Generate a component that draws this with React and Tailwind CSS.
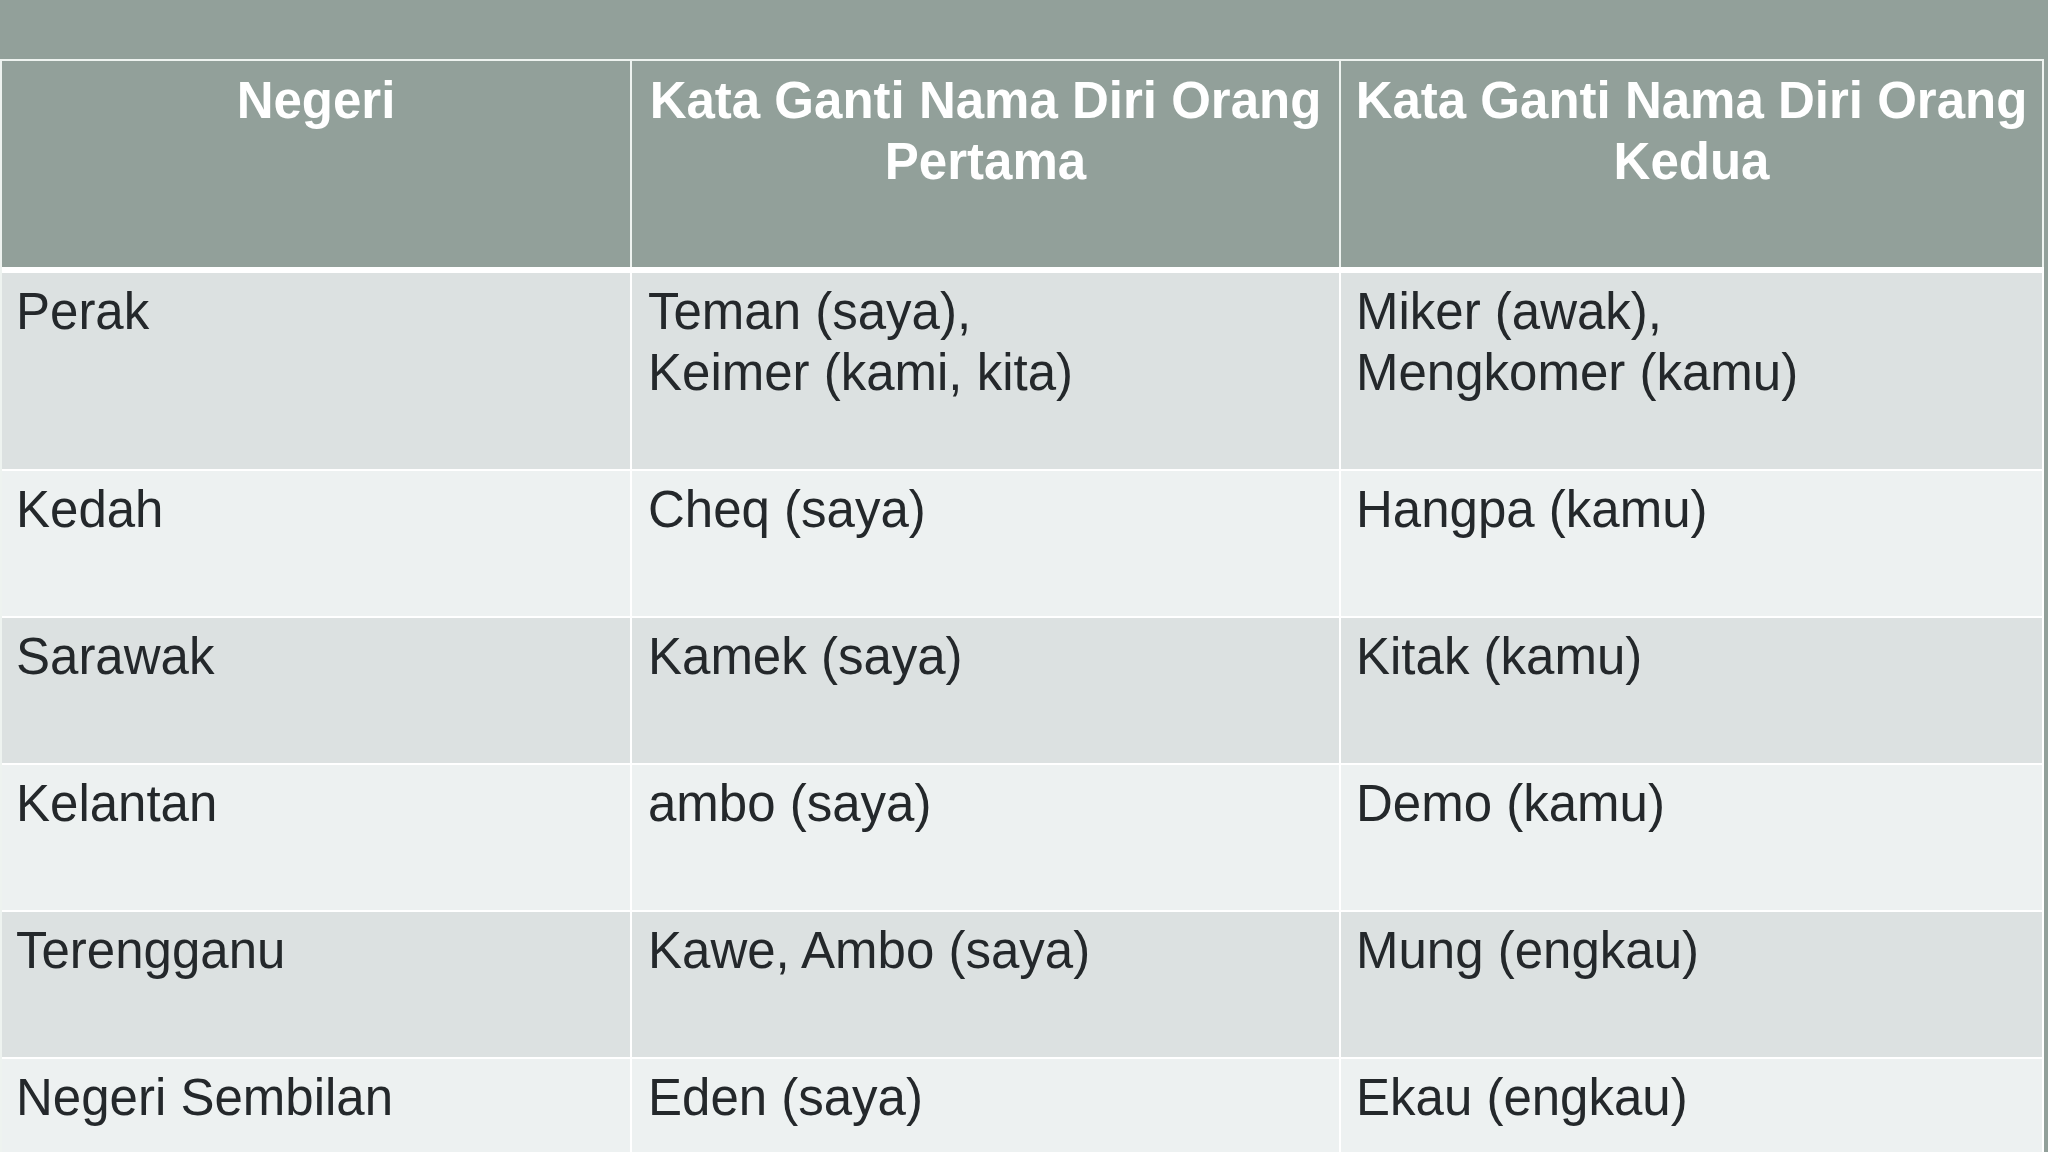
const rows = [
  { negeri: "Perak", first: ["Teman (saya),", "Keimer (kami, kita)"], second: ["Miker (awak),", "Mengkomer (kamu)"], tall: true },
  { negeri: "Kedah", first: ["Cheq (saya)"], second: ["Hangpa (kamu)"] },
  { negeri: "Sarawak", first: ["Kamek (saya)"], second: ["Kitak (kamu)"] },
  { negeri: "Kelantan", first: ["ambo (saya)"], second: ["Demo (kamu)"] },
  { negeri: "Terengganu", first: ["Kawe, Ambo (saya)"], second: ["Mung (engkau)"] },
  { negeri: "Negeri Sembilan", first: ["Eden (saya)"], second: ["Ekau (engkau)"] }
];

const Lines = ({ lines }) => (
  <>
    {lines.map((l, i) => (
      <div key={i} className="whitespace-nowrap">
        {l}
      </div>
    ))}
  </>
);

const App = () => {
  return (
    <div
      className="w-[2048px] h-[1152px] overflow-hidden bg-[#92a09a]"
      style={{ fontFamily: '"Liberation Sans", Arial, sans-serif' }}
    >
      {/* top band */}
      <div className="h-[59px]" />

      <div className="w-[2044px] border-t-2 border-l-2 border-[#eef3f0] bg-white">
        {/* header */}
        <div className="flex h-[206px] bg-[#92a09a] text-white font-bold text-[51px] leading-[61px] text-center">
          <div className="w-[630px] shrink-0 pt-[9px] border-r-2 border-[#eef3f0]">Negeri</div>
          <div className="w-[709px] shrink-0 pt-[9px] border-r-2 border-[#eef3f0]">
            <Lines lines={["Kata Ganti Nama Diri Orang", "Pertama"]} />
          </div>
          <div className="w-[703px] shrink-0 pt-[9px] border-r-2 border-[#eef3f0]">
            <Lines lines={["Kata Ganti Nama Diri Orang", "Kedua"]} />
          </div>
        </div>

        {/* body */}
        <div className="pt-[6px] flex flex-col gap-[2px] text-[#24282b] text-[51px] leading-[61px]">
          {rows.map((r, i) => (
            <div
              key={r.negeri}
              className={`flex ${r.tall ? "h-[196px]" : "h-[145px]"} ${
                i % 2 === 0 ? "bg-[#dce1e1]" : "bg-[#edf1f1]"
              }`}
            >
              <div className="w-[630px] shrink-0 pl-[14px] pt-[8px] border-r-2 border-white">{r.negeri}</div>
              <div className="w-[709px] shrink-0 pl-[16px] pt-[8px] border-r-2 border-white">
                <Lines lines={r.first} />
              </div>
              <div className="w-[703px] shrink-0 pl-[15px] pt-[8px] border-r-2 border-white">
                <Lines lines={r.second} />
              </div>
            </div>
          ))}
        </div>
      </div>
    </div>
  );
};

export default App;
